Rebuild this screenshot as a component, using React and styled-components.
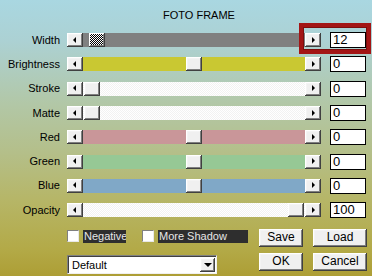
import React from "react";
import styled, { createGlobalStyle } from "styled-components";

const Global = createGlobalStyle`
  html, body { margin: 0; padding: 0; }
  body { font-family: "Liberation Sans", Arial, sans-serif; }
`;

const Page = styled.div`
  position: relative;
  width: 372px;
  height: 276px;
  overflow: hidden;
  box-sizing: border-box;
  background: linear-gradient(
    to bottom,
    #a9d7e1 0%,
    #acd1d3 15%,
    #b2c7a6 38%,
    #b4bf8a 55%,
    #b6b668 72%,
    #b3aa48 90%,
    #ad9e35 100%
  );
  color: #000;
`;

const Title = styled.div`
  height: 28px;
  box-sizing: border-box;
  padding: 9px 0 0 26px;
  display: flex;
  justify-content: center;
  font-size: 11px;
  line-height: 13px;
`;

const Rows = styled.div`
  display: grid;
  grid-template-columns: 53px 254px 38px;
  grid-auto-rows: 24.3px;
  column-gap: 7px;
  padding-left: 7px;
  align-items: center;
`;

const Label = styled.div`
  text-align: right;
  font-size: 11px;
  line-height: 13px;
  white-space: nowrap;
`;

const Bar = styled.div`
  display: flex;
  height: 14px;
`;

const bevel = `
  background: #f0f0f0;
  box-shadow: inset -1px -1px #404040, inset 1px 1px #ffffff,
    inset -2px -2px #808080, inset 2px 2px #f4f4f4;
`;

const ArrowBtn = styled.div`
  ${bevel}
  width: 16px;
  height: 14px;
  flex: none;
  display: flex;
  align-items: center;
  justify-content: center;
  box-sizing: border-box;
  padding-bottom: 1px;
  &::after {
    content: "";
    width: 0;
    height: 0;
    border-top: 3px solid transparent;
    border-bottom: 3px solid transparent;
    ${(p) =>
      p.$dir === "left"
        ? "border-right: 3px solid #000; margin-right: 1px;"
        : "border-left: 3px solid #000; margin-left: 1px;"}
  }
`;

const dither = (a, b) =>
  `repeating-conic-gradient(${a} 0 25%, ${b} 0 50%) 0 0 / 2px 2px`;

const Track = styled.div`
  position: relative;
  flex: 1;
  background: ${(p) => p.$bg};
`;

const Thumb = styled.div`
  position: absolute;
  top: 0;
  width: 16px;
  height: 14px;
  ${bevel}
  ${(p) =>
    p.$checker &&
    `background: ${dither("#000", "#fff")};
     box-shadow: inset -1px -1px #404040, inset 1px 1px #ffffff, inset -2px -2px #808080;`}
`;

const ValueBox = styled.div`
  justify-self: end;
  width: 36px;
  height: 16px;
  box-sizing: border-box;
  border: 1px solid #000;
  background: #fff;
  font-size: 13px;
  line-height: 14px;
  padding-left: 2px;
`;

const Highlight = styled.div`
  position: absolute;
  left: 299px;
  top: 23px;
  width: 72px;
  height: 31px;
  box-sizing: border-box;
  border: 4px solid #a31515;
  box-shadow: inset 0 0 0 1px #7d0d0d;
  pointer-events: none;
`;

const Bottom = styled.div`
  display: flex;
  flex-direction: column;
  gap: 6px;
  padding-left: 67px;
  margin-top: 6.6px;
`;

const BottomRow = styled.div`
  display: flex;
  height: 18px;
  gap: 10px;
`;

const LeftArea = styled.div`
  width: 182px;
  flex: none;
  display: flex;
  align-items: ${(p) => (p.$top ? "flex-start" : "flex-end")};
  padding-top: ${(p) => (p.$top ? 1 : 0)}px;
  box-sizing: border-box;
`;

const Box = styled.div`
  width: 12px;
  height: 12px;
  flex: none;
  box-sizing: border-box;
  background: #fff;
  border-top: 1px solid #808080;
  border-left: 1px solid #808080;
  border-right: 1px solid #e8e8e8;
  border-bottom: 1px solid #e8e8e8;
  margin-left: ${(p) => p.$ml || 0}px;
`;

const CheckText = styled.div`
  width: ${(p) => p.$w}px;
  flex: none;
  height: 13px;
  margin-left: 4px;
  background: #2e2e2e;
  color: #e6e6e6;
  font-size: 11px;
  line-height: 13px;
  padding-left: 1px;
  box-sizing: border-box;
  white-space: nowrap;
  overflow: hidden;
`;

const Button = styled.div`
  ${bevel}
  width: ${(p) => p.$w}px;
  flex: none;
  height: 18px;
  display: flex;
  align-items: center;
  justify-content: center;
  font-size: 12px;
  line-height: 14px;
  padding-bottom: 1px;
  box-sizing: border-box;
`;

const Select = styled.div`
  display: flex;
  align-items: stretch;
  height: 19px;
  margin-bottom: -3px;
  width: 150px;
  flex: none;
  box-sizing: border-box;
  background: #fff;
  border-top: 1px solid #808080;
  border-left: 1px solid #808080;
  border-right: 1px solid #f0f0f0;
  border-bottom: 1px solid #f0f0f0;
  box-shadow: inset 1px 1px #404040;
  padding: 2px 1px 1px 2px;
`;

const SelectText = styled.div`
  flex: 1;
  font-size: 11px;
  line-height: 15px;
  padding-left: 2px;
`;

const DropBtn = styled.div`
  ${bevel}
  width: 15px;
  flex: none;
  display: flex;
  align-items: center;
  justify-content: center;
  &::after {
    content: "";
    border-left: 4px solid transparent;
    border-right: 4px solid transparent;
    border-top: 4px solid #000;
    margin-top: 1px;
  }
`;

const DITHER = dither("#f2f2f2", "#ffffff");

const rows = [
  { label: "Width", bg: "#808080", pos: 6, value: "12", checker: true },
  { label: "Brightness", bg: "#c9c832", pos: 103, value: "0" },
  { label: "Stroke", bg: DITHER, pos: 1, value: "0" },
  { label: "Matte", bg: DITHER, pos: 1, value: "0" },
  { label: "Red", bg: "#c99699", pos: 103, value: "0" },
  { label: "Green", bg: "#96c895", pos: 103, value: "0" },
  { label: "Blue", bg: "#80a8c7", pos: 103, value: "0" },
  { label: "Opacity", bg: DITHER, pos: 205, value: "100" },
];

export default function App() {
  return (
    <>
      <Global />
      <Page>
        <Title>FOTO FRAME</Title>
        <Rows>
          {rows.map((r) => (
            <React.Fragment key={r.label}>
              <Label>{r.label}</Label>
              <Bar>
                <ArrowBtn $dir="left" />
                <Track $bg={r.bg}>
                  <Thumb $checker={r.checker} style={{ left: r.pos }} />
                </Track>
                <ArrowBtn $dir="right" />
              </Bar>
              <ValueBox>{r.value}</ValueBox>
            </React.Fragment>
          ))}
        </Rows>
        <Bottom>
          <BottomRow>
            <LeftArea $top>
              <Box />
              <CheckText $w={43}>Negative</CheckText>
              <Box $ml={16} />
              <CheckText $w={90}>More Shadow</CheckText>
            </LeftArea>
            <Button $w={44}>Save</Button>
            <Button $w={54}>Load</Button>
          </BottomRow>
          <BottomRow>
            <LeftArea>
              <Select>
                <SelectText>Default</SelectText>
                <DropBtn />
              </Select>
            </LeftArea>
            <Button $w={44}>OK</Button>
            <Button $w={54}>Cancel</Button>
          </BottomRow>
        </Bottom>
        <Highlight />
      </Page>
    </>
  );
}
